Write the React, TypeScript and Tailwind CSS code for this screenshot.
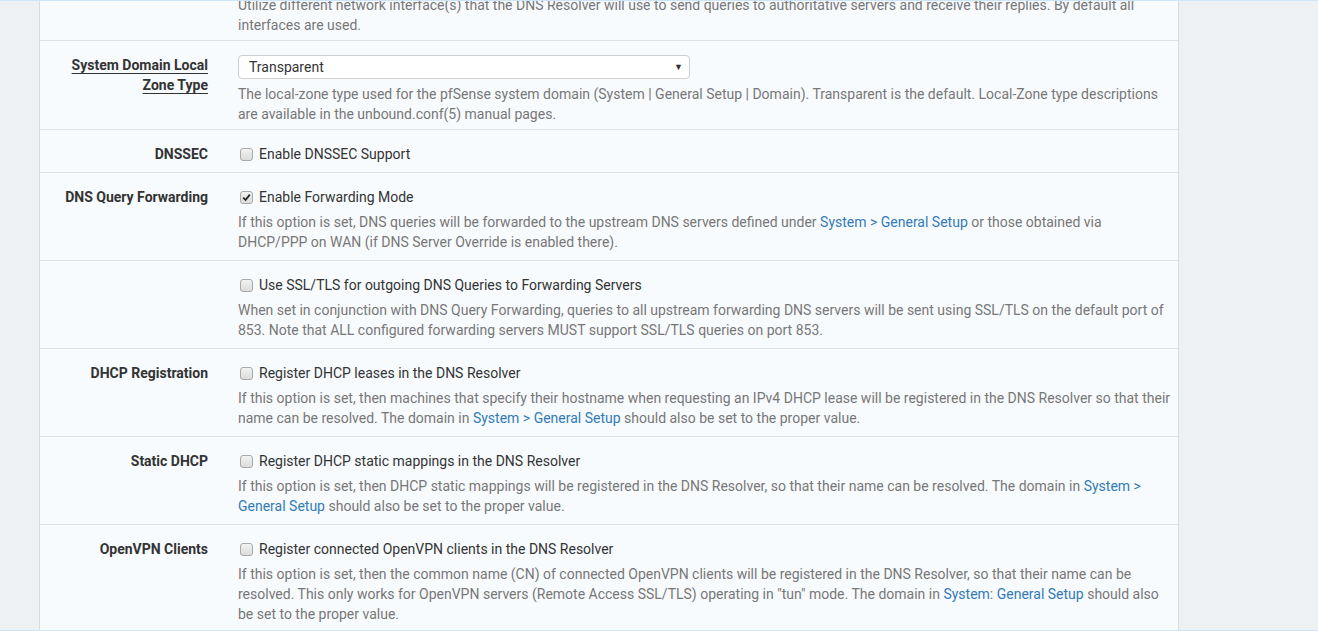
import React from 'react';

const Link: React.FC<{ children: React.ReactNode }> = ({ children }) => (
    <span className="text-[#337ab7]">{children}</span>
);

const Checkbox: React.FC<{ checked?: boolean }> = ({ checked }) => (
    <span className="inline-flex items-center justify-center w-[13px] h-[13px] rounded-[3px] border border-[#a9a9a9] bg-gradient-to-b from-[#f2f2f2] to-[#dcdcdc] shrink-0">
        {checked && (
            <svg width="9" height="9" viewBox="0 0 9 9">
                <path d="M1.2 4.6 L3.6 7 L7.8 1.6" fill="none" stroke="#222" strokeWidth="1.8" />
            </svg>
        )}
    </span>
);

const Help: React.FC<{ lines: React.ReactNode[] }> = ({ lines }) => (
    <div className="mt-[5px] text-[#777]">
        {lines.map((l, i) => (
            <div key={i} className="whitespace-nowrap">{l}</div>
        ))}
    </div>
);

const Row: React.FC<{ label?: React.ReactNode; pb?: string; children: React.ReactNode }> = ({ label, pb = 'pb-[8px]', children }) => (
    <div className={`flex border-b border-[#dfe3e7] pt-[14px] ${pb}`}>
        <div className="w-[168px] shrink-0 text-right font-bold text-[#333]">{label}</div>
        <div className="ml-[30px] flex-1">{children}</div>
    </div>
);

const CheckLine: React.FC<{ checked?: boolean; text: string }> = ({ checked, text }) => (
    <div className="flex items-center gap-[6px] pl-[2px] text-[#333]">
        <Checkbox checked={checked} />
        <span>{text}</span>
    </div>
);

export default function App() {
    return (
        <div
            className="h-[631px] bg-[#edf1f4] border-y border-[#cfe4f6] text-[14px] leading-[20px]"
            style={{ fontFamily: 'Roboto, "Liberation Sans", sans-serif' }}
        >
            <div className="h-[629px] overflow-hidden flex">
                <div className="w-[39px] shrink-0" />
                <div className="w-[1140px] shrink-0 bg-[#f7fbfe] border-x border-[#d8dcdf] -mt-[6px]">
                    <Row pb="pb-[5px]">
                        <div className="text-[#777] -mt-[14px]">
                            <div className="whitespace-nowrap">Utilize different network interface(s) that the DNS Resolver will use to send queries to authoritative servers and receive their replies. By default all</div>
                            <div className="whitespace-nowrap">interfaces are used.</div>
                        </div>
                    </Row>
                    <Row
                        pb="pb-[5px]"
                        label={
                            <span className="underline underline-offset-[3px] decoration-1">
                                System Domain Local
                                <br />
                                Zone Type
                            </span>
                        }
                    >
                        <div className="w-[452px] h-[24px] rounded-[4px] border border-[#cfcfcf] bg-white flex items-center justify-between pl-[10px] pr-[6px] text-[#333]">
                            <span>Transparent</span>
                            <span className="text-[9px] leading-none text-[#333]">▼</span>
                        </div>
                        <Help
                            lines={[
                                'The local-zone type used for the pfSense system domain (System | General Setup | Domain). Transparent is the default. Local-Zone type descriptions',
                                'are available in the unbound.conf(5) manual pages.',
                            ]}
                        />
                    </Row>
                    <Row label="DNSSEC">
                        <CheckLine text="Enable DNSSEC Support" />
                    </Row>
                    <Row label="DNS Query Forwarding">
                        <CheckLine checked text="Enable Forwarding Mode" />
                        <Help
                            lines={[
                                <>If this option is set, DNS queries will be forwarded to the upstream DNS servers defined under <Link>System &gt; General Setup</Link> or those obtained via</>,
                                'DHCP/PPP on WAN (if DNS Server Override is enabled there).',
                            ]}
                        />
                    </Row>
                    <Row>
                        <CheckLine text="Use SSL/TLS for outgoing DNS Queries to Forwarding Servers" />
                        <Help
                            lines={[
                                'When set in conjunction with DNS Query Forwarding, queries to all upstream forwarding DNS servers will be sent using SSL/TLS on the default port of',
                                '853. Note that ALL configured forwarding servers MUST support SSL/TLS queries on port 853.',
                            ]}
                        />
                    </Row>
                    <Row label="DHCP Registration">
                        <CheckLine text="Register DHCP leases in the DNS Resolver" />
                        <Help
                            lines={[
                                'If this option is set, then machines that specify their hostname when requesting an IPv4 DHCP lease will be registered in the DNS Resolver so that their',
                                <>name can be resolved. The domain in <Link>System &gt; General Setup</Link> should also be set to the proper value.</>,
                            ]}
                        />
                    </Row>
                    <Row label="Static DHCP">
                        <CheckLine text="Register DHCP static mappings in the DNS Resolver" />
                        <Help
                            lines={[
                                <>If this option is set, then DHCP static mappings will be registered in the DNS Resolver, so that their name can be resolved. The domain in <Link>System &gt;</Link></>,
                                <><Link>General Setup</Link> should also be set to the proper value.</>,
                            ]}
                        />
                    </Row>
                    <Row label="OpenVPN Clients">
                        <CheckLine text="Register connected OpenVPN clients in the DNS Resolver" />
                        <Help
                            lines={[
                                'If this option is set, then the common name (CN) of connected OpenVPN clients will be registered in the DNS Resolver, so that their name can be',
                                <>resolved. This only works for OpenVPN servers (Remote Access SSL/TLS) operating in "tun" mode. The domain in <Link>System</Link>: <Link>General Setup</Link> should also</>,
                                'be set to the proper value.',
                            ]}
                        />
                    </Row>
                </div>
            </div>
        </div>
    );
}
